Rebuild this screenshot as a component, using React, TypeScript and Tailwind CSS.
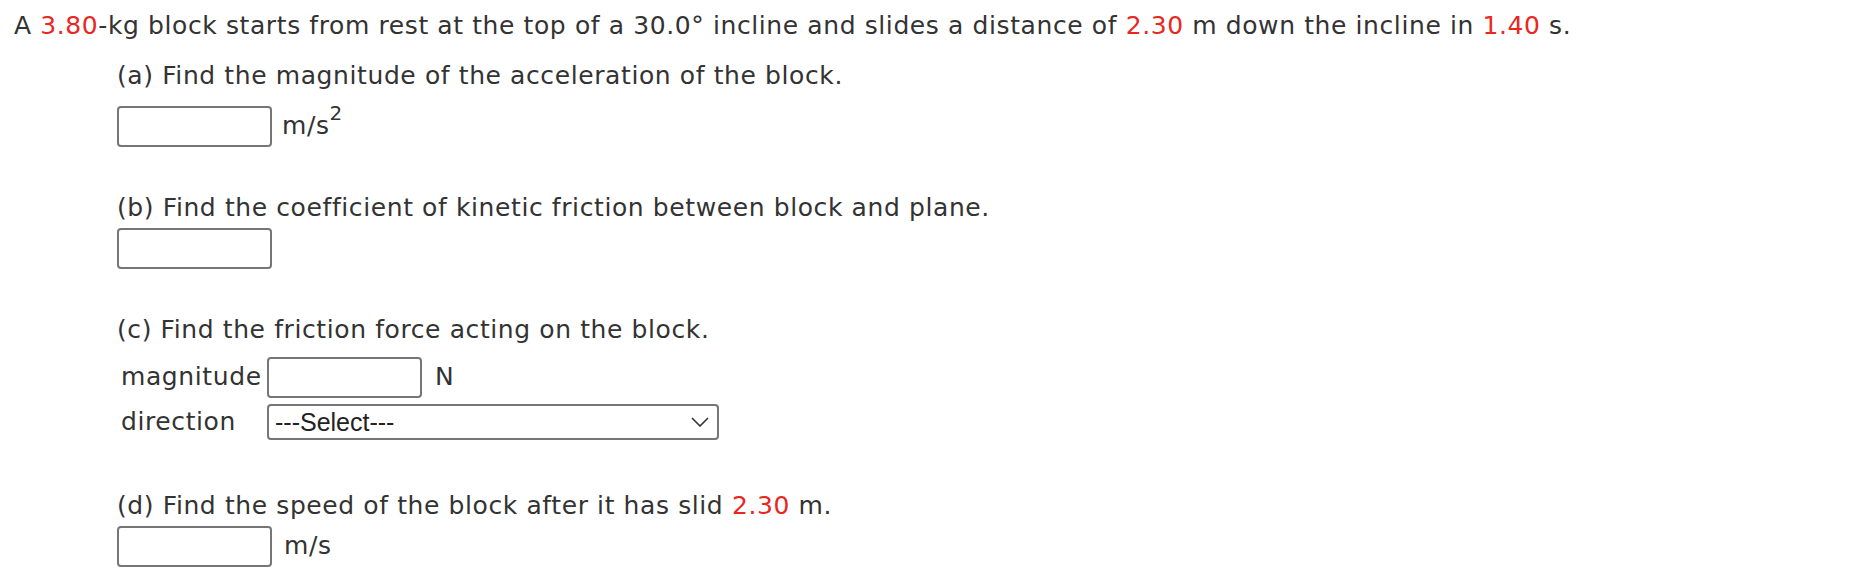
import React from "react";

const Red = ({ children }: { children: React.ReactNode }) => (
  <span className="text-[#e8281f]">{children}</span>
);

const Input = () => (
  <div className="w-[155px] h-[41px] border-2 border-[#767676] rounded-[4px] bg-white shrink-0" />
);

export default function App() {
  return (
    <div
      className="bg-white w-[1870px] h-[582px] text-[#333333] text-[25px] tracking-[0.6px] leading-[36px] pl-[14px] pt-[8px]"
      style={{ fontFamily: '"DejaVu Sans", Verdana, sans-serif' }}
    >
      <p>
        A <Red>3.80</Red>-kg block starts from rest at the top of a 30.0° incline and slides a distance of{" "}
        <Red>2.30</Red> m down the incline in <Red>1.40</Red> s.
      </p>
      <div className="pl-[103px]">
        <p className="mt-[14px]">(a) Find the magnitude of the acceleration of the block.</p>
        <div className="flex items-center mt-[12px] h-[40px]">
          <Input />
          <span className="ml-[10px]">
            m/s<sup className="text-[20px] -top-[14px]">2</sup>
          </span>
        </div>

        <p className="mt-[44px]">(b) Find the coefficient of kinetic friction between block and plane.</p>
        <div className="flex items-center mt-[2px] h-[40px]">
          <Input />
        </div>

        <p className="mt-[44px]">(c) Find the friction force acting on the block.</p>
        <div className="flex items-center mt-[9px] h-[40px] pl-[4px]">
          <span className="w-[146px]">magnitude</span>
          <Input />
          <span className="ml-[13px]">N</span>
        </div>
        <div className="flex items-center mt-[7px] h-[36px] pl-[4px]">
          <span className="w-[146px]">direction</span>
          <div className="w-[452px] h-[36px] border-2 border-[#767676] rounded-[4px] flex items-center justify-between pl-[6px] pr-[8px] tracking-normal">
            <span
              className="text-[25px] text-[#222222] leading-none"
              style={{ fontFamily: '"Liberation Sans", Arial, sans-serif' }}
            >
              ---Select---
            </span>
            <svg width="18" height="10" viewBox="0 0 18 10" fill="none">
              <path d="M1 1l8 8 8-8" stroke="#333" strokeWidth="1.6" />
            </svg>
          </div>
        </div>

        <p className="mt-[48px]">
          (d) Find the speed of the block after it has slid <Red>2.30</Red> m.
        </p>
        <div className="flex items-center mt-[2px] h-[40px]">
          <Input />
          <span className="ml-[12px]">m/s</span>
        </div>
      </div>
    </div>
  );
}
